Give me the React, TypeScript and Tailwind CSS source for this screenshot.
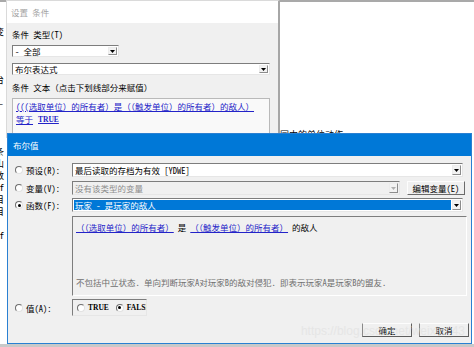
import React from 'react';

const font = "font-['Noto_Sans_Mono_CJK_SC','Liberation_Mono','Noto_Sans_CJK_SC',monospace]";

const Radio = ({ checked = false }: { checked?: boolean }) => (
  <span className="flex h-[8px] w-[8px] shrink-0 items-center justify-center rounded-full border border-[#e2e2e2] border-t-[#6e6e6e] border-l-[#6e6e6e] bg-white">
    {checked && <span className="h-[3px] w-[3px] rounded-full bg-black" />}
  </span>
);

const DropArrow = ({ disabled = false }: { disabled?: boolean }) => (
  <span className="my-[1px] mr-[1px] flex w-[9px] shrink-0 items-center justify-center border border-[#ececec] border-b-[#8c8c8c] border-r-[#8c8c8c] bg-[#f2f2f2]">
    <svg width="5" height="3" viewBox="0 0 5 3">
      <path d="M0 0h5L2.5 3z" fill={disabled ? '#b0b0b0' : '#000'} />
    </svg>
  </span>
);

const sunken = 'border border-[#e6e6e6] border-t-[#7d7d7d] border-l-[#7d7d7d]';

const leftGlyphs = ['', '', '变', '', '', '', '台', '', '—', '', '」', '', '条', '山', '数', 'ef', '目', '目', '', 'ef', '', '', '', '', '', '', '', '', ''];

const App: React.FC = () => {
  return (
    <div className={`relative h-[347px] w-[474px] overflow-hidden bg-white text-[8.5px] leading-[12px] text-black ${font}`}>
      {/* background window */}
      <div className="absolute inset-0 border-t-2 border-[#a9a9a9] bg-white">
        <div className="flex w-[8px] flex-col">
          {leftGlyphs.map((g, i) => (
            <span key={i} className="-ml-[5px] h-[12px] whitespace-nowrap text-[9px] leading-[12px]">{g}</span>
          ))}
        </div>
        <div className="absolute left-[280px] top-[127px] text-[9px]">同中的单位动作</div>
        <div className="absolute bottom-0 left-0 h-[3px] w-full bg-[#c9c9c9]" />
      </div>

      {/* 设置 条件 */}
      <div className="absolute left-[6px] top-0 flex h-[138px] w-[274px] flex-col border-l border-r-2 border-t border-[#dadada] border-r-[#a6a6a6] bg-[#f0f0f0]">
        <div className="flex h-[22px] items-center bg-white pl-[4px] text-[#a3a3a3]">设置 条件</div>
        <div className="flex flex-col px-[5px] pt-[5px]">
          <div>条件 类型(T)</div>
          <div className={`mt-[5px] flex h-[12px] w-[107px] bg-white ${sunken}`}>
            <span className="flex-1 pl-[2px] leading-[10px]">- 全部</span>
            <DropArrow />
          </div>
          <div className={`mt-[6px] flex h-[12px] w-[258px] bg-white ${sunken}`}>
            <span className="flex-1 pl-[2px] leading-[10px]">布尔表达式</span>
            <DropArrow />
          </div>
          <div className="mt-[6px]">条件 文本（点击下划线部分来赋值）</div>
          <div className="mt-[5px] flex h-[40px] w-[258px] flex-col border border-[#b9b9b9] bg-[#f9f9f9] pl-[3px] pt-[1px] leading-[13px] text-[#2323c8]">
            <span className="underline">(((选取单位）的所有者）是（（触发单位）的所有者）的敌人）</span>
            <span className="flex gap-[5px]">
              <span className="underline">等于</span>
              <span className="font-['Liberation_Serif',serif] text-[7.5px] font-bold underline">TRUE</span>
            </span>
          </div>
        </div>
      </div>

      {/* 布尔值 */}
      <div className="absolute left-[7px] top-[133px] flex h-[211px] w-[465px] flex-col border border-[#2a80d2] bg-[#f0f0f0]">
        <div className="flex h-[22px] items-center bg-[#0078d7] pl-[5px] text-white">布尔值</div>
        <div className="flex flex-1 flex-col pt-[7px]">
          <div className="flex h-[14px] items-center">
            <div className="flex w-[64px] items-center pl-[7px]">
              <Radio />
              <span className="ml-[3px]">预设(R):</span>
            </div>
            <div className={`flex h-full w-[391px] bg-white ${sunken}`}>
              <span className="flex-1 pl-[2px] leading-[12px]">最后读取的存档为有效 [YDWE]</span>
              <DropArrow />
            </div>
          </div>

          <div className="mt-[4px] flex h-[14px] items-center">
            <div className="flex w-[64px] items-center pl-[7px]">
              <Radio />
              <span className="ml-[3px]">变量(V):</span>
            </div>
            <div className={`flex h-full w-[328px] bg-[#f0f0f0] ${sunken}`}>
              <span className="flex-1 pl-[2px] leading-[12px] text-[#8d8d8d]">没有该类型的变量</span>
              <DropArrow disabled />
            </div>
            <button className="ml-[7px] flex h-full w-[58px] items-center justify-center border border-[#fdfdfd] border-b-[#6b6b6b] border-r-[#6b6b6b] bg-[#f0f0f0]">
              编辑变量(E)
            </button>
          </div>

          <div className="mt-[3px] flex h-[14px] items-center">
            <div className="flex w-[64px] items-center pl-[7px]">
              <Radio checked />
              <span className="ml-[3px]">函数(F):</span>
            </div>
            <div className={`flex h-full w-[391px] bg-white ${sunken}`}>
              <span className="m-[1px] flex-1 bg-[#0078d7] pl-[1px] leading-[10px] text-white">玩家 - 是玩家的敌人</span>
              <DropArrow />
            </div>
          </div>

          <div className={`ml-[64px] mt-[4px] flex h-[80px] w-[395px] flex-col justify-between pb-[7px] pl-[3px] pt-[4px] ${sunken} border-b-white border-r-white`}>
            <div className="flex gap-[4px]">
              <span className="text-[#2323c8] underline">（（选取单位）的所有者）</span>
              <span>是</span>
              <span className="text-[#2323c8] underline">（（触发单位）的所有者）</span>
              <span>的敌人</span>
            </div>
            <div className="text-[#6f6f6f]">不包括中立状态. 单向判断玩家A对玩家B的敌对侵犯. 即表示玩家A是玩家B的盟友.</div>
          </div>

          <div className="mt-[3px] flex h-[17px] items-center">
            <div className="flex w-[64px] items-center pl-[7px]">
              <Radio />
              <span className="ml-[3px]">值(A):</span>
            </div>
            <div className={`flex h-full w-[75px] items-center overflow-hidden whitespace-nowrap pl-[4px] font-['Liberation_Serif',serif] text-[7.5px] font-bold ${sunken}`}>
              <Radio />
              <span className="ml-[3px]">TRUE</span>
              <span className="ml-[7px]"><Radio checked /></span>
              <span className="ml-[3px]">FALSE</span>
            </div>
          </div>

          <div className="relative mt-[7px] flex justify-end gap-[7px] pr-[2px]">
            <button className="flex h-[14px] w-[50px] items-center justify-center border border-[#fdfdfd] border-b-[#5e5e5e] border-r-[#5e5e5e] border-l-[#8a8a8a] bg-[#f0f0f0]">确定</button>
            <button className="flex h-[14px] w-[50px] items-center justify-center border border-[#fdfdfd] border-b-[#5e5e5e] border-r-[#5e5e5e] border-l-[#8a8a8a] bg-[#f0f0f0]">取消</button>
            <span className="pointer-events-none absolute right-[6px] top-[2px] font-['Liberation_Sans',sans-serif] text-[12px] text-[#dcdcdc] opacity-50">https://blog.csdn.net/weixin_43</span>
          </div>
        </div>
      </div>
    </div>
  );
};

export default App;
